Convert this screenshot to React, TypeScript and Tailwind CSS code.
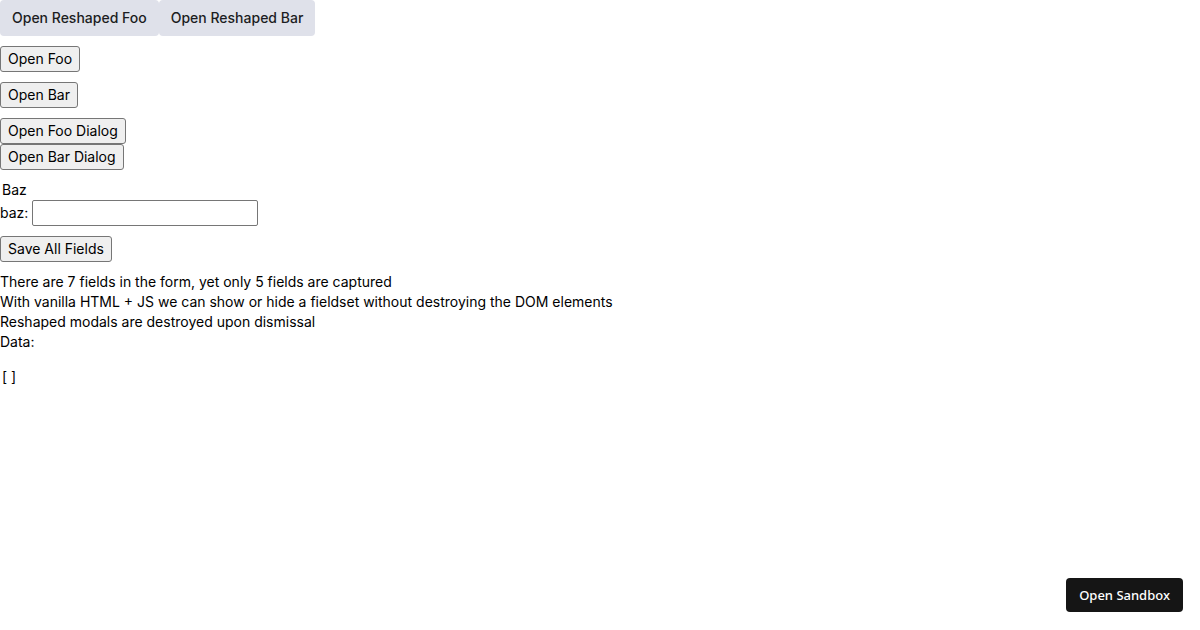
import { useState } from 'react'

const font = { fontFamily: 'Inter, "Liberation Sans", sans-serif' }

function NativeButton({ children }: { children: React.ReactNode }) {
  return (
    <button className="block rounded-[3px] border border-[#767676] bg-[#efefef] px-[7px] py-[2px] text-[14px] leading-5 text-black">
      {children}
    </button>
  )
}

export default function App() {
  const [baz, setBaz] = useState('')

  return (
    <div className="min-h-[630px] bg-white text-[14px] leading-5 text-black" style={font}>
      <div className="flex">
        <button className="h-9 rounded-[4px] bg-[#dfe1ea] px-3 text-[14px] font-medium text-[#1c1d22]">
          Open Reshaped Foo
        </button>
        <button className="h-9 rounded-[4px] bg-[#dfe1ea] px-3 text-[14px] font-medium text-[#1c1d22]">
          Open Reshaped Bar
        </button>
      </div>

      <div className="mt-[10px]">
        <NativeButton>Open Foo</NativeButton>
      </div>
      <div className="mt-[10px]">
        <NativeButton>Open Bar</NativeButton>
      </div>
      <div className="mt-[10px]">
        <NativeButton>Open Foo Dialog</NativeButton>
        <NativeButton>Open Bar Dialog</NativeButton>
      </div>

      <form className="mt-[10px]">
        <div className="pl-[2px]">Baz</div>
        <label className="flex items-center">
          <span>baz:</span>
          <input
            value={baz}
            onChange={(e) => setBaz(e.target.value)}
            className="ml-1 h-[26px] w-[226px] rounded-[2px] border border-[#767676] px-1 text-[14px]"
          />
        </label>
        <div className="mt-[10px]">
          <NativeButton>Save All Fields</NativeButton>
        </div>
      </form>

      <div className="mt-[10px]">
        <div>There are 7 fields in the form, yet only 5 fields are captured</div>
        <div>With vanilla HTML + JS we can show or hide a fieldset without destroying the DOM elements</div>
        <div>Reshaped modals are destroyed upon dismissal</div>
        <div>Data:</div>
        <pre className="mt-[15px] pl-[2px] text-[14px] leading-5" style={font}>
          [ ]
        </pre>
      </div>

      <button
        className="fixed bottom-[18px] right-[17px] h-[34px] rounded-[4px] bg-[#151515] px-[13px] text-[13px] font-medium text-white"
        style={{ fontFamily: '"Noto Sans", "Open Sans", sans-serif' }}
      >
        Open Sandbox
      </button>
    </div>
  )
}
